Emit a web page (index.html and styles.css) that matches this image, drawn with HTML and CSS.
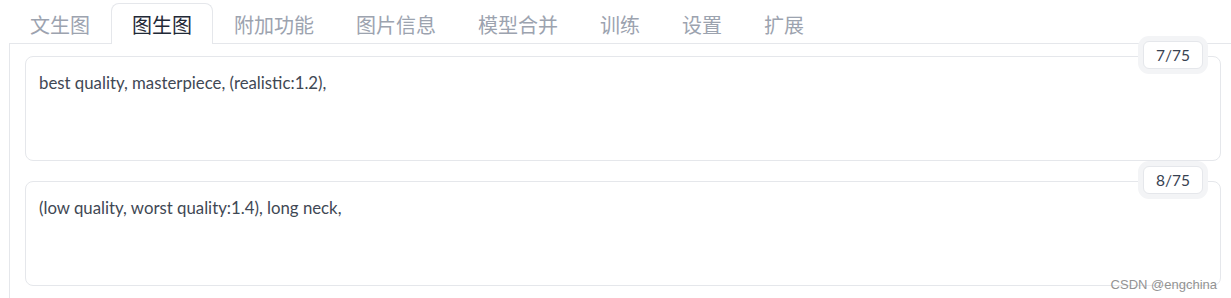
FILE: index.html
```html
<!DOCTYPE html>
<html lang="zh-CN">
<head>
  <meta charset="UTF-8" />
  <meta name="viewport" content="width=device-width, initial-scale=1" />
  <title>Stable Diffusion WebUI</title>
  <link rel="stylesheet" href="styles.css">
</head>
<body>
  <div class="tabs">
    <button class="tab">文生图</button>
    <button class="tab active">图生图</button>
    <button class="tab">附加功能</button>
    <button class="tab">图片信息</button>
    <button class="tab">模型合并</button>
    <button class="tab">训练</button>
    <button class="tab">设置</button>
    <button class="tab">扩展</button>
  </div>
  <div class="panel">
    <div class="prompt">
      <textarea class="prompt-box" readonly>best quality, masterpiece, (realistic:1.2),</textarea>
      <span class="token-count">7/75</span>
    </div>
    <div class="prompt">
      <textarea class="prompt-box" readonly>(low quality, worst quality:1.4), long neck,</textarea>
      <span class="token-count">8/75</span>
      <span class="watermark">CSDN @engchina</span>
    </div>
  </div>
</body>
</html>
```

FILE: styles.css
```css
body {
  margin: 0;
  padding: 3px 0 0 9px;
  background: #fff;
  font-family: Lato, 'Noto Sans', sans-serif;
  overflow: hidden;
}
.tabs {
  display: flex;
  height: 40px;
  position: relative;
  z-index: 1;
}
.tab {
  background: none;
  border: 1px solid transparent;
  border-bottom: none;
  border-radius: 8px 8px 0 0;
  padding: 0 20px;
  margin: 0 0 -1px 0;
  height: 41px;
  font-family: 'Noto Sans CJK SC', sans-serif;
  font-size: 20px;
  color: #9ca3af;
  cursor: pointer;
}
.tab.active {
  border-color: #e5e7eb;
  background: #fff;
  color: #1f2937;
}
.panel {
  width: 1228px;
  box-sizing: border-box;
  border: 1px solid #e5e7eb;
  padding: 12px 15px 40px 15px;
  display: flex;
  flex-direction: column;
  gap: 20px;
}
.prompt {
  position: relative;
}
.prompt-box {
  display: block;
  width: 100%;
  height: 105px;
  box-sizing: border-box;
  border: 1px solid #e5e7eb;
  border-radius: 8px;
  padding: 14px 13px;
  resize: none;
  outline: none;
  font-family: Lato, 'Noto Sans', sans-serif;
  font-size: 16.8px;
  line-height: 24px;
  color: #3f4854;
  background: #fff;
}
.token-count {
  position: absolute;
  top: -15px;
  right: 18px;
  width: 60px;
  height: 28px;
  box-sizing: border-box;
  border: 1px solid #e5e7eb;
  border-radius: 6px;
  background: #fff;
  box-shadow: 0 0 0 5px #f3f4f6;
  font-size: 15.5px;
  line-height: 26px;
  text-align: center;
  color: #374151;
}
.watermark {
  position: absolute;
  right: 4px;
  bottom: -6px;
  font-family: 'Liberation Sans', Arial, sans-serif;
  font-size: 13px;
  color: #939393;
}
```
